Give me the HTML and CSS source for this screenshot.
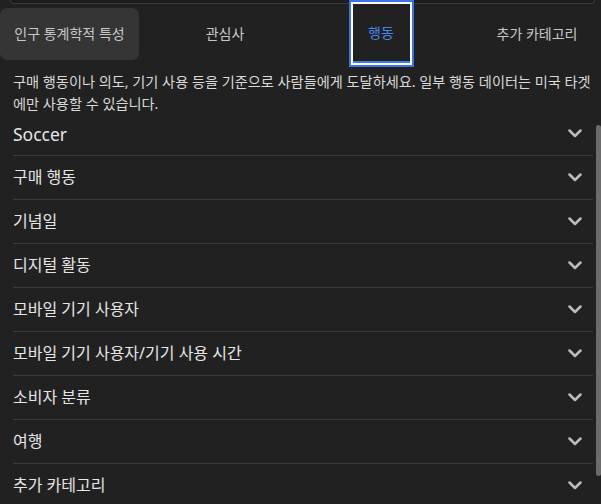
FILE: index.html
```html
<!DOCTYPE html>
<html lang="ko">
<head>
<meta charset="utf-8">
<title>행동</title>
<link rel="stylesheet" href="styles.css">
</head>
<body>
<div class="page">
  <div class="topbox"></div>
  <div class="tabs">
    <div class="tab tab-hover">인구 통계학적 특성</div>
    <div class="tab">관심사</div>
    <div class="tab tab-active">행동</div>
    <div class="tab">추가 카테고리</div>
  </div>
  <p class="desc">구매 행동이나 의도, 기기 사용 등을 기준으로 사람들에게 도달하세요. 일부 행동 데이터는 미국 타겟에만 사용할 수 있습니다.</p>
  <ul class="list">
    <li class="row"><span class="row-label latin">Soccer</span><svg class="chev" viewBox="0 0 14 9"><polyline points="1.5,1.5 7,7 12.5,1.5"/></svg></li>
    <li class="row"><span class="row-label">구매 행동</span><svg class="chev" viewBox="0 0 14 9"><polyline points="1.5,1.5 7,7 12.5,1.5"/></svg></li>
    <li class="row"><span class="row-label">기념일</span><svg class="chev" viewBox="0 0 14 9"><polyline points="1.5,1.5 7,7 12.5,1.5"/></svg></li>
    <li class="row"><span class="row-label">디지털 활동</span><svg class="chev" viewBox="0 0 14 9"><polyline points="1.5,1.5 7,7 12.5,1.5"/></svg></li>
    <li class="row"><span class="row-label">모바일 기기 사용자</span><svg class="chev" viewBox="0 0 14 9"><polyline points="1.5,1.5 7,7 12.5,1.5"/></svg></li>
    <li class="row"><span class="row-label">모바일 기기 사용자/기기 사용 시간</span><svg class="chev" viewBox="0 0 14 9"><polyline points="1.5,1.5 7,7 12.5,1.5"/></svg></li>
    <li class="row"><span class="row-label">소비자 분류</span><svg class="chev" viewBox="0 0 14 9"><polyline points="1.5,1.5 7,7 12.5,1.5"/></svg></li>
    <li class="row"><span class="row-label">여행</span><svg class="chev" viewBox="0 0 14 9"><polyline points="1.5,1.5 7,7 12.5,1.5"/></svg></li>
    <li class="row"><span class="row-label">추가 카테고리</span><svg class="chev" viewBox="0 0 14 9"><polyline points="1.5,1.5 7,7 12.5,1.5"/></svg></li>
  </ul>
  <div class="scrollbar"></div>
</div>
</body>
</html>
```
FILE: styles.css
```css
html, body {
  margin: 0;
  padding: 0;
  background: #212121;
}
body {
  width: 601px;
  height: 504px;
  overflow: hidden;
  font-family: "Noto Sans", "Noto Sans CJK KR", sans-serif;
}
.page {
  position: relative;
  width: 601px;
  height: 504px;
  overflow: hidden;
}
.topbox {
  height: 3px;
  margin: 0 6px 0 10px;
  border: 1px solid #3a3a3a;
  border-top: none;
  border-radius: 0 0 5px 5px;
  background: #1c1c1c;
}
.tabs {
  display: grid;
  grid-template-columns: 147px 156px 156px 156px;
  height: 59px;
}
.tab {
  display: flex;
  align-items: center;
  justify-content: center;
  justify-self: center;
  font-size: 14px;
  color: #c8c8c8;
  white-space: nowrap;
  padding-bottom: 2px;
  box-sizing: border-box;
}
.tab-hover {
  justify-self: start;
  align-self: center;
  width: 139px;
  height: 52px;
  background: #353535;
  border-radius: 7px;
}
.tab-active {
  width: 57px;
  border-bottom: 2px solid #3d7be6;
  color: #4a84ea;
  box-shadow: 0 0 0 2px #ffffff, 0 0 0 4px #3b74e4;
}
.desc {
  margin: 8px 9px 0 13px;
  font-size: 14.2px;
  line-height: 22px;
  color: #dadada;
}
.list {
  list-style: none;
  margin: -3px 8px 0 13px;
  padding: 0;
}
.row {
  display: flex;
  align-items: center;
  justify-content: space-between;
  height: 43px;
  border-bottom: 1px solid #3a3a3a;
  padding-right: 11px;
}
.row-label {
  font-size: 16px;
  color: #e6e6e6;
  padding-bottom: 3px;
}
.row-label.latin {
  font-size: 17.5px;
  padding-bottom: 0;
}
.chev {
  width: 14px;
  height: 9px;
  fill: none;
  stroke: #bdbdbd;
  stroke-width: 2.5;
  stroke-linecap: round;
  stroke-linejoin: round;
}
.scrollbar {
  position: absolute;
  left: 596px;
  top: 125px;
  width: 5px;
  height: 351px;
  background: #6b6b6b;
  border-radius: 3px;
}
```
